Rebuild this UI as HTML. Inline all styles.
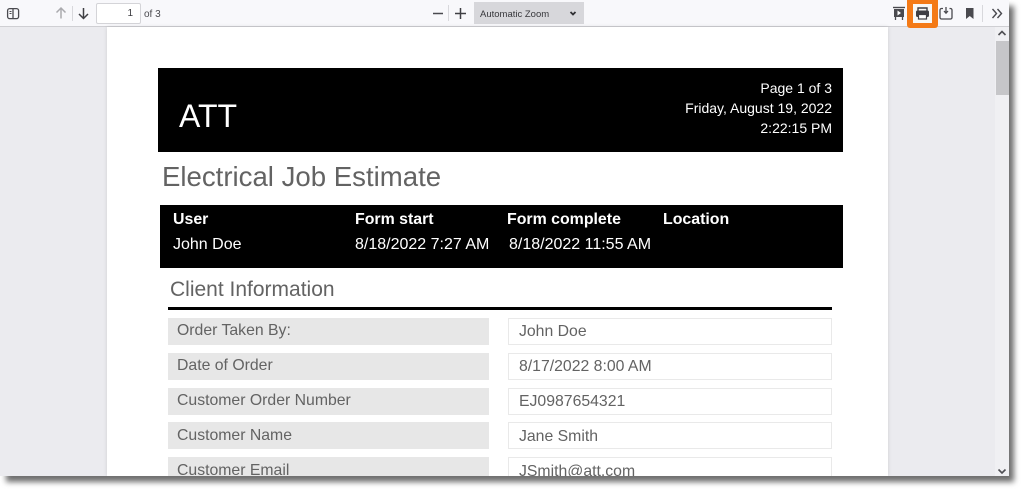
<!DOCTYPE html>
<html><head><meta charset="utf-8"><style>
html,body{margin:0;padding:0;background:#fff;width:1024px;height:491px;overflow:hidden}
body{font-family:"Liberation Sans",sans-serif;position:relative}
.a{position:absolute;white-space:nowrap}
.l{position:absolute;left:168px;width:321px;height:27px;background:#e7e7e7}
.lt{position:absolute;left:177px;font-size:15.8px;line-height:20px;color:#636363;white-space:nowrap}
.v{position:absolute;left:508px;width:322px;height:25px;background:#fff;border:1px solid #e9e9e9}
.vt{position:absolute;left:519px;font-size:15.8px;line-height:20px;color:#636363;white-space:nowrap}
.w{color:#fff;font-size:16px;line-height:20px}
.b{font-weight:bold;font-size:15.9px}
.sep{position:absolute;width:1px;background:#d8d8dc}
</style></head><body>
<div class="a" style="left:6px;top:6px;width:1008px;height:476px;background:#6f6f6f;filter:blur(3px)"></div>
<div id="win" class="a" style="left:0;top:0;width:1009px;height:476px;overflow:hidden;background:#ebebef">
<div class="a" style="left:0;top:0;width:1009px;height:26px;background:#f8f8fb;border-bottom:1px solid #cfcfd3"></div>
<div class="sep" style="left:72px;top:6px;height:15px"></div>
<div class="sep" style="left:448px;top:5px;height:16px"></div>
<div class="sep" style="left:982px;top:5px;height:17px"></div>
<div class="a" style="left:96px;top:3px;width:43px;height:19px;background:#fff;border:1px solid #d4d4d8;border-radius:2px;font-size:10px;line-height:20px;text-align:right;color:#3c3c40"><span style="padding-right:7px;display:block;height:19px">1</span></div>
<div class="a" style="left:144px;top:9px;font-size:10px;line-height:11px;color:#4a4a4f">of 3</div>
<div class="a" style="left:474px;top:2px;width:110px;height:22px;background:#d7d7db"></div>
<div class="a" style="left:480px;top:9px;font-size:9.5px;line-height:11px;color:#38383c">Automatic Zoom</div>
<svg class="a" style="left:0;top:0" width="1009" height="29" fill="none">
<g stroke="#4a4a4f" stroke-width="1.3"><rect x="7.6" y="8.6" width="11" height="10" rx="2"/><path d="M13 9v9"/><path d="M9.5 11.5h2M9.5 13.5h2" stroke-width="1"/></g>
<path d="M61 18.500V8M56.500 12.500 61 8l4.500 4.500" stroke="#aaaaae" stroke-width="1.500"/>
<path d="M83.500 8v10.500M79 14l4.500 4.500L88 14" stroke="#3f3f44" stroke-width="1.500"/>
<path d="M433 13.500h10" stroke="#4a4a4f" stroke-width="1.500"/>
<path d="M455 13.500h11M460.500 8v11" stroke="#3f3f44" stroke-width="1.500"/>
<path d="M570.500 12 573 14.500l2.500-2.500" stroke="#2f2f33" stroke-width="1.800"/>
<path d="M893 7.500h12" stroke="#4a4a4f" stroke-width="1.400"/><path d="M894 9h10v8h-10z" fill="#4a4a4f"/><path d="M897.500 10.500l3.500 2.500-3.500 2.500z" fill="#fff"/><path d="M895.500 17v3M902.500 17v3" stroke="#4a4a4f" stroke-width="1.300"/>
<path d="M907 0h31v25a3 3 0 0 1-3 3h-25a3 3 0 0 1-3-3z" fill="#f47a16"/>
<rect x="913" y="4" width="19" height="19" fill="#f8f8f6"/>
<path d="M918 11V8h9v3" stroke="#3f3f44" stroke-width="1.400"/><rect x="916" y="10.500" width="13" height="6.500" rx="1.500" fill="#3f3f44"/><rect x="918.500" y="14.500" width="8" height="4.500" fill="#fff" stroke="#3f3f44" stroke-width="1.200"/>
<path d="M943 8.500h-1.500a1.500 1.500 0 0 0-1.500 1.500v7.500a1.500 1.500 0 0 0 1.500 1.500h9a1.500 1.500 0 0 0 1.500-1.500V10a1.500 1.500 0 0 0-1.500-1.500h-1" stroke="#4a4a4f" stroke-width="1.300"/><path d="M946 7v6M944 11l2 2.200 2-2.200" stroke="#4a4a4f" stroke-width="1.300"/>
<path d="M966 8h7.500v11l-3.750-3-3.750 3z" fill="#4a4a4f"/>
<path d="M992.500 9l4 4.500-4 4.500M997.500 9l4 4.500-4 4.500" stroke="#4a4a4f" stroke-width="1.400"/>
</svg>

<div class="a" style="left:107px;top:27px;width:781px;height:449px;background:#fff;box-shadow:0 0 4px rgba(0,0,0,.12)"></div>
<div class="a" style="left:995px;top:27px;width:14px;height:449px;background:#f0f0f3"></div>
<div class="a" style="left:996px;top:41px;width:13px;height:54px;background:#c6c6c9"></div>
<svg class="a" style="left:995px;top:27px" width="14" height="449" fill="none"><path d="M3.500 8 7 4.500 10.500 8" stroke="#4f4f54" stroke-width="1.600"/><path d="M3.500 442.500 7 446l3.500-3.500" stroke="#4f4f54" stroke-width="1.600"/></svg>

<div class="a" style="left:158px;top:68px;width:685px;height:84px;background:#000"></div>
<div class="a" style="left:179px;top:98px;font-size:32px;line-height:37px;color:#fff">ATT</div>
<div class="a w" style="left:632px;width:200px;top:78px;text-align:right;font-size:14px;line-height:20px">Page 1 of 3<br>Friday, August 19, 2022<br>2:22:15 PM</div>
<div class="a" style="left:162px;top:160px;font-size:27.6px;line-height:33px;color:#636363">Electrical Job Estimate</div>

<div class="a" style="left:160px;top:205px;width:683px;height:63px;background:#000"></div>
<div class="a w b" style="left:173px;top:210px">User</div>
<div class="a w b" style="left:355px;top:210px">Form start</div>
<div class="a w b" style="left:507px;top:210px">Form complete</div>
<div class="a w b" style="left:663px;top:210px">Location</div>
<div class="a w" style="left:173px;top:235px">John Doe</div>
<div class="a w" style="left:355px;top:235px">8/18/2022 7:27 AM</div>
<div class="a w" style="left:509px;top:235px">8/18/2022 11:55 AM</div>

<div class="a" style="left:170px;top:277px;font-size:21px;line-height:25px;color:#636363">Client Information</div>
<div class="a" style="left:168px;top:307px;width:664px;height:3px;background:#000"></div>

<div class="l" style="top:318px"></div><div class="lt" style="top:321px">Order Taken By:</div>
<div class="l" style="top:353px"></div><div class="lt" style="top:356px">Date of Order</div>
<div class="l" style="top:388px"></div><div class="lt" style="top:391px">Customer Order Number</div>
<div class="l" style="top:422px"></div><div class="lt" style="top:426px">Customer Name</div>
<div class="l" style="top:457px"></div><div class="lt" style="top:461px">Customer Email</div>

<div class="v" style="top:318px"></div><div class="vt" style="top:322px">John Doe</div>
<div class="v" style="top:353px"></div><div class="vt" style="top:357px">8/17/2022 8:00 AM</div>
<div class="v" style="top:388px"></div><div class="vt" style="top:392px">EJ0987654321</div>
<div class="v" style="top:422px"></div><div class="vt" style="top:427px">Jane Smith</div>
<div class="v" style="top:457px"></div><div class="vt" style="top:462px">JSmith@att.com</div>
</div>
</body></html>
